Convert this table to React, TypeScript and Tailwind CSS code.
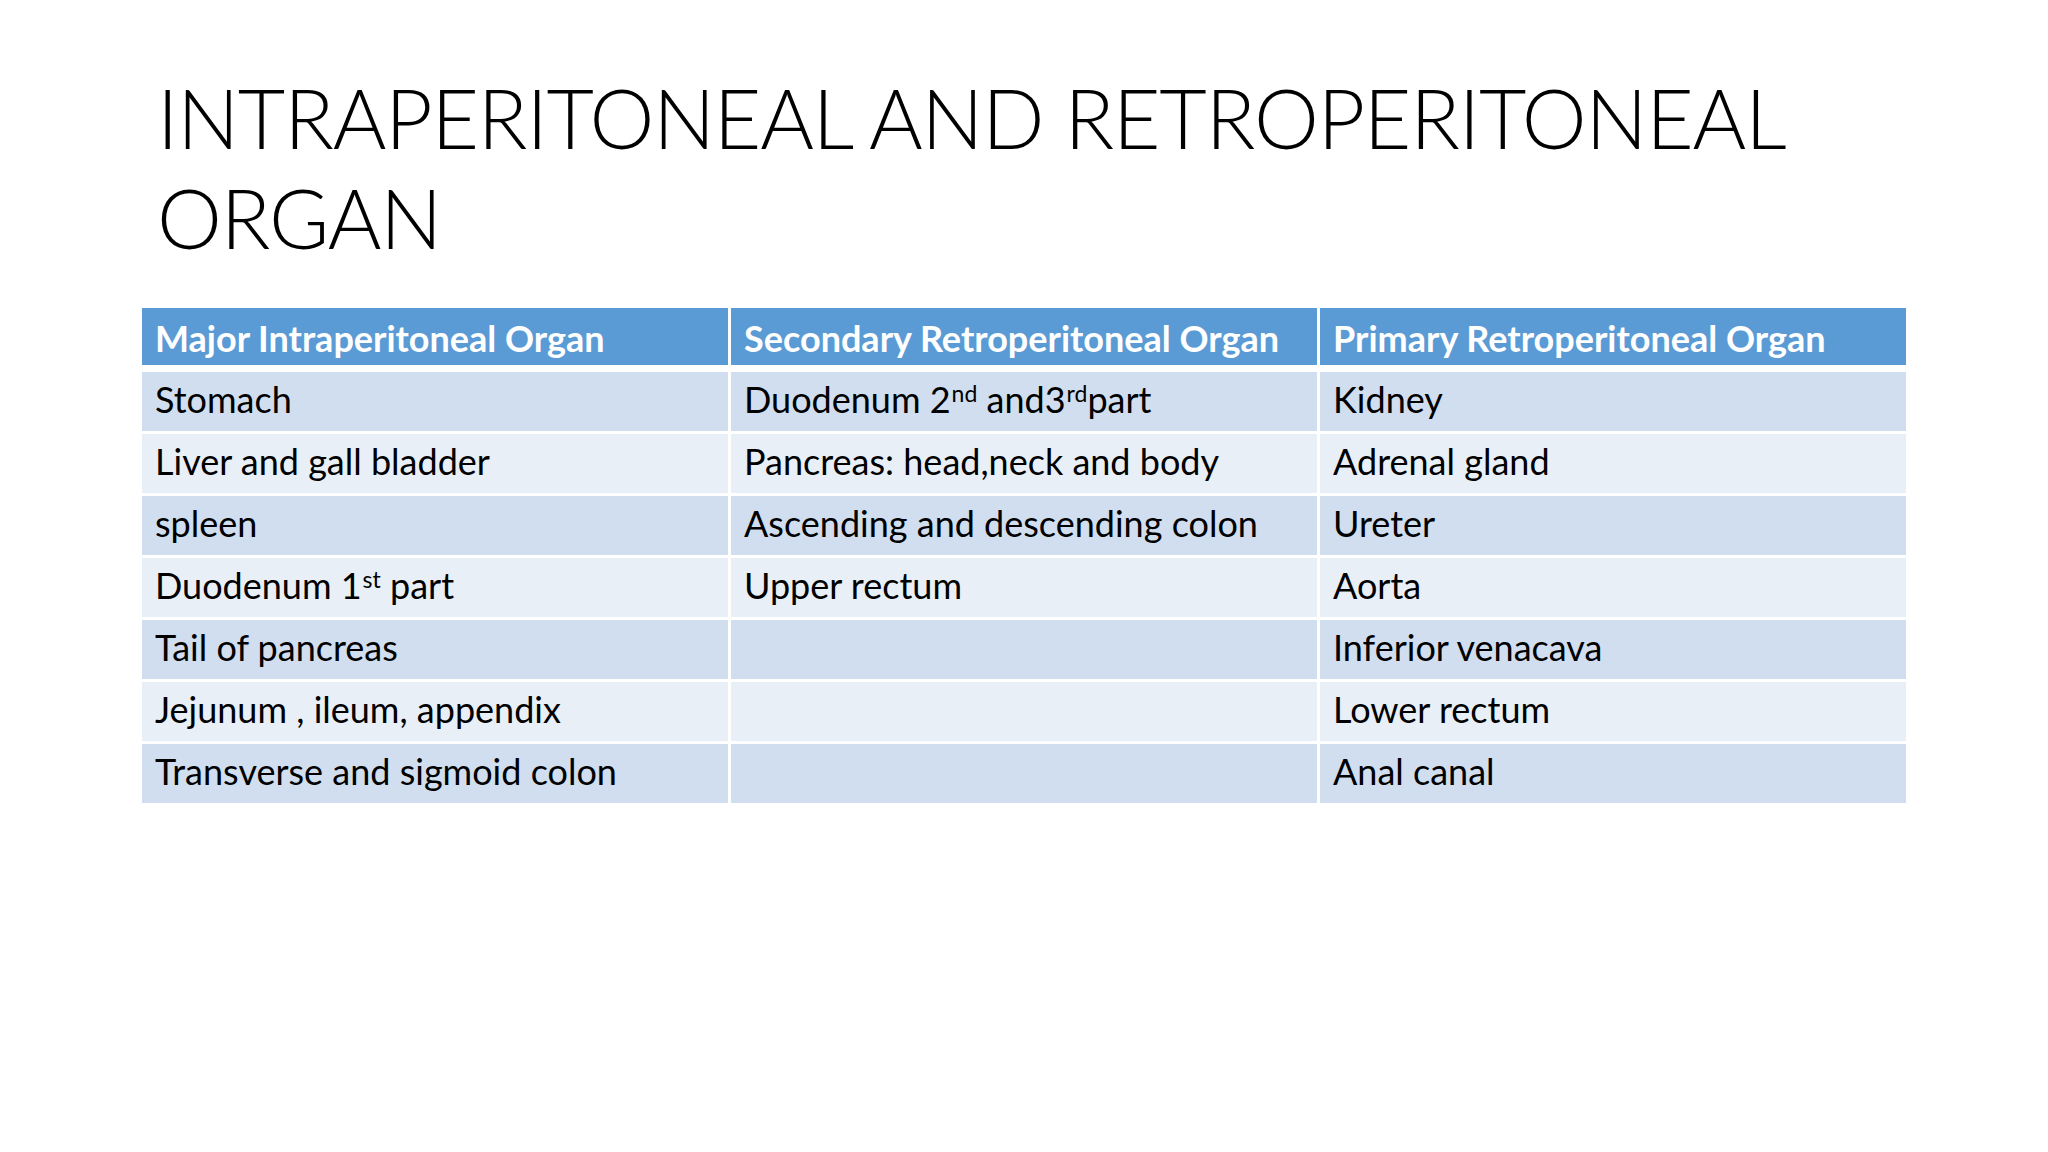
import React from 'react';

type Cell = React.ReactNode;

const font = { fontFamily: 'Lato, "Open Sans", sans-serif' };

function Sup({ children }: { children: React.ReactNode }) {
  return <sup className="text-[23px] ml-[1px] top-[-0.5em]">{children}</sup>;
}

const rows: Cell[][] = [
  [
    'Stomach',
    <>
      Duodenum 2<Sup>nd</Sup> and3<Sup>rd</Sup>part
    </>,
    'Kidney',
  ],
  ['Liver and gall bladder', 'Pancreas: head,neck and body', 'Adrenal gland'],
  ['spleen', 'Ascending and descending colon', 'Ureter'],
  [
    <>
      Duodenum 1<Sup>st</Sup> part
    </>,
    'Upper rectum',
    'Aorta',
  ],
  ['Tail of pancreas', '', 'Inferior venacava'],
  ['Jejunum , ileum, appendix', '', 'Lower rectum'],
  ['Transverse and sigmoid colon', '', 'Anal canal'],
];

const headers = [
  'Major Intraperitoneal Organ',
  'Secondary Retroperitoneal Organ',
  'Primary Retroperitoneal Organ',
];

export default function App() {
  return (
    <div className="w-[2048px] h-[1152px] bg-white overflow-hidden text-black" style={font}>
      {/* Title */}
      <h1 className="pl-[157px] pt-[67px] text-[82px] leading-[100px] font-light tracking-[-1.2px]">
        INTRAPERITONEAL AND RETROPERITONEAL
        <br />
        ORGAN
      </h1>

      {/* Table */}
      <div className="ml-[142px] mt-[41px] w-[1764px]">
        <div className="grid grid-cols-3 gap-x-[3px] mb-[7px]">
          {headers.map((h) => (
            <div
              key={h}
              className="h-[57px] bg-[#5b9bd5] flex items-center pl-[13px] pt-[2px] text-white font-bold text-[36px] leading-none whitespace-nowrap"
            >
              {h}
            </div>
          ))}
        </div>
        <div className="flex flex-col gap-y-[3px]">
          {rows.map((row, i) => (
            <div key={i} className="grid grid-cols-3 gap-x-[3px]">
              {row.map((cell, j) => (
                <div
                  key={j}
                  className={`h-[59px] flex items-center pl-[13px] pb-[5px] text-[36px] leading-none whitespace-nowrap ${
                    i % 2 === 0 ? 'bg-[#d0deef]' : 'bg-[#e9eff7]'
                  }`}
                >
                  <span>{cell}</span>
                </div>
              ))}
            </div>
          ))}
        </div>
      </div>
    </div>
  );
}
